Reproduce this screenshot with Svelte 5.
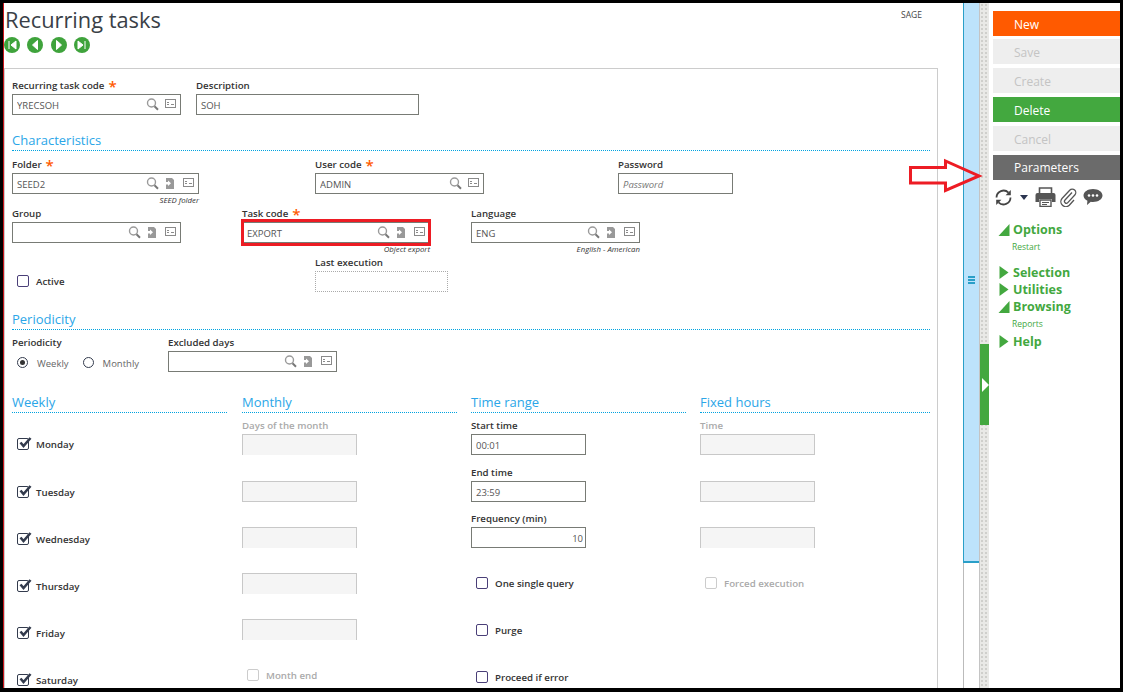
<script>
	const navs = [
		'M5 4v8M12 4 7 8l5 4z',
		'M10.5 3.5 5.5 8l5 4.500z',
		'M5.500 3.500 10.500 8l-5 4.500z',
		'M4 4l5 4-5 4zM11 4v8'
	];
	const days = ['Monday', 'Tuesday', 'Wednesday', 'Thursday', 'Friday', 'Saturday'];
	const monthly = [true, false, true, true, true];
</script>

{#snippet search()}
	<svg class="ico" width="14" height="14" viewBox="0 0 14 14" fill="none">
		<circle cx="6.500" cy="6" r="4" stroke="#9a9a9a" stroke-width="1.400" />
		<path d="M9.500 9.300 13 12.800" stroke="#777" stroke-width="2" />
	</svg>
{/snippet}

{#snippet jump()}
	<svg class="ico" width="14" height="14" viewBox="0 0 14 14">
		<path d="M3 2h6l2 2v9H3z" fill="#999" />
		<path d="M2 6h3V4.500L8 7.200 5 10V8.500H2z" fill="#fff" />
	</svg>
{/snippet}

{#snippet card()}
	<svg class="ico" width="14" height="14" viewBox="0 0 14 14" fill="none">
		<rect x="2.500" y="2.500" width="10" height="8" stroke="#8a8a8a" />
		<path d="M4 5.500h2M4 7.500h2M8 7.500h3" stroke="#8a8a8a" />
	</svg>
{/snippet}

{#snippet lookup(cls, label, value, req, icons, caption)}
	<div class="field {cls}">
		<span class="lbl">{label}{#if req}<b class="req">*</b>{/if}</span>
		<div class="box">
			<input {value} readonly />
			{@render search()}
			{#if icons > 2}{@render jump()}{/if}
			{@render card()}
		</div>
		{#if caption}<span class="caption">{caption}</span>{/if}
	</div>
{/snippet}

{#snippet text(cls, label, value)}
	<div class="field {cls}">
		<span class="lbl">{label}</span>
		<div class="box"><input {value} readonly /></div>
	</div>
{/snippet}

{#snippet off(label, cut)}
	<div class="field w115 off">
		<span class="lbl">{label}</span>
		<div class="box" class:cut></div>
	</div>
{/snippet}

{#snippet check(label, on, dim)}
	<div class="check" class:dim>
		<span class="tick" class:on>
			{#if on}
				<svg width="16" height="14" viewBox="0 0 16 14" fill="none">
					<path d="M3.500 6.500 6.500 10 13.500 2" stroke="#333b4d" stroke-width="2.600" />
				</svg>
			{/if}
		</span>
		{label}
	</div>
{/snippet}

<div class="frame">
	<main>
		<header>
			<div class="top">
				<h1>Recurring tasks</h1>
				<span class="sage">SAGE</span>
			</div>
			<div class="navs">
				{#each navs as d}
					<svg width="16" height="16" viewBox="0 0 16 16">
						<circle cx="8" cy="8" r="8" fill="#3fa33c" />
						<path {d} fill="#fff" stroke="#fff" stroke-width="1" />
					</svg>
				{/each}
			</div>
		</header>

		<form class="card">
			<div class="row-one">
				{@render lookup('w169', 'Recurring task code', 'YRECSOH', true, 2)}
				{@render text('w223', 'Description', 'SOH')}
			</div>

			<h2 class="first">Characteristics</h2>
			<div class="grid-top">
				{@render lookup('w187 c1', 'Folder', 'SEED2', true, 3, 'SEED folder')}
				{@render lookup('w169 c3', 'User code', 'ADMIN', true, 2)}
				<div class="field w115 c5">
					<span class="lbl">Password</span>
					<div class="box"><input class="pass" placeholder="Password" readonly /></div>
				</div>

				{@render lookup('w169 c1', 'Group', '', false, 3)}
				<div class="c2 marked">
					{@render lookup('w188', 'Task code', 'EXPORT', true, 3, 'Object export')}
				</div>
				{@render lookup('w169 c4', 'Language', 'ENG', false, 3, 'English - American')}

				<div class="c1 active">{@render check('Active', false)}</div>
				<div class="field w133 c3 last">
					<span class="lbl">Last execution</span>
					<div class="box"></div>
				</div>
			</div>

			<h2 class="second">Periodicity</h2>
			<div class="period">
				<div class="period-left">
					<span class="lbl">Periodicity</span>
					<div class="radios">
						<span class="radio on"></span><span class="opt">Weekly</span>
						<span class="radio"></span><span class="opt">Monthly</span>
					</div>
				</div>
				{@render lookup('w169', 'Excluded days', '', false, 3)}
			</div>

			<div class="columns">
				<section>
					<h2>Weekly</h2>
					<div class="days">
						{#each days as day}
							{@render check(day, true)}
						{/each}
					</div>
				</section>

				<section>
					<h2>Monthly</h2>
					<div class="stack month">
						{#each monthly as cut, i}
							{@render off(i === 0 ? 'Days of the month' : '', cut)}
						{/each}
						{@render check('Month end', false, true)}
					</div>
				</section>

				<section>
					<h2>Time range</h2>
					<div class="stack times">
						{@render text('w115', 'Start time', '00:01')}
						{@render text('w115', 'End time', '23:59')}
						{@render text('w115 num', 'Frequency (min)', '10')}
						{@render check('One single query', false)}
						{@render check('Purge', false)}
						{@render check('Proceed if error', false)}
					</div>
				</section>

				<section>
					<h2>Fixed hours</h2>
					<div class="stack times">
						{@render off('Time', false)}
						{@render off('', false)}
						{@render off('', true)}
						{@render check('Forced execution', false, true)}
					</div>
				</section>
			</div>
		</form>
	</main>

	<div class="rail">
		<div class="thumb">
			<span class="burger"></span>
		</div>
	</div>

	<div class="gutter">
		<div class="grip"><span></span></div>
	</div>

	<aside>
		<div class="buttons">
			<button class="orange">New</button>
			<button disabled>Save</button>
			<button disabled>Create</button>
			<button class="green">Delete</button>
			<button disabled>Cancel</button>
			<button class="dark">Parameters</button>
		</div>

		<div class="tools">
			<svg class="refresh" width="19" height="19" viewBox="0 0 19 19" fill="none">
				<path d="M2.500 9.500a7 7 0 0 1 12-4.800" stroke="#444" stroke-width="1.800" />
				<path d="M16.500 9.500a7 7 0 0 1-12 4.800" stroke="#444" stroke-width="1.800" />
				<path d="M16.800 2v5.200h-5.200zM2.200 17v-5.200h5.200z" fill="#444" />
			</svg>
			<svg class="caret" width="8" height="5" viewBox="0 0 8 5"><path d="M0 0h8L4 5z" fill="#2b3550" /></svg>
			<svg class="printer" width="21" height="20" viewBox="0 0 21 20">
				<path d="M4.500 1h12v6h-12z" fill="none" stroke="#555" stroke-width="1.600" />
				<path d="M2.500 6h16a2 2 0 0 1 2 2v7h-3.500v-3H4v3H.5V8a2 2 0 0 1 2-2z" fill="#555" />
				<path d="M5 13h11v6.500H5z" fill="#fff" stroke="#555" stroke-width="1.400" />
				<path d="M7 15.500h7M7 17.500h5" stroke="#555" />
			</svg>
			<svg class="clip" width="18" height="20" viewBox="0 0 18 20" fill="none">
				<path d="M13 5.500 6 13a1.900 1.900 0 0 0 2.800 2.600l7-7.600a3.500 3.500 0 0 0-5.100-4.800L3 11.500a5 5 0 0 0 7.300 6.800L15 13" stroke="#555" stroke-width="1.300" />
			</svg>
			<svg class="chat" width="20" height="18" viewBox="0 0 20 18">
				<path d="M10 1c5.300 0 9.500 2.900 9.500 6.500S15.300 14 10 14c-.8 0-1.500-.1-2.200-.2L4 17l.4-4.300C2 11.500.5 9.700.5 7.500.5 3.900 4.700 1 10 1z" fill="#555" />
				<circle cx="6" cy="7.500" r="1.300" fill="#fff" />
				<circle cx="10" cy="7.500" r="1.300" fill="#fff" />
				<circle cx="14" cy="7.500" r="1.300" fill="#fff" />
			</svg>
		</div>

		<nav>
			<div class="item one">
				<svg width="11" height="12" viewBox="0 0 11 12"><path d="M11 0v12H0z" fill="#43a83f" /></svg>
				Options
			</div>
			<div class="sub">Restart</div>
			<div class="item two">
				<svg width="9" height="13" viewBox="0 0 9 13"><path d="M0 0l9 6.500L0 13z" fill="#43a83f" /></svg>
				Selection
			</div>
			<div class="item">
				<svg width="9" height="13" viewBox="0 0 9 13"><path d="M0 0l9 6.500L0 13z" fill="#43a83f" /></svg>
				Utilities
			</div>
			<div class="item">
				<svg width="11" height="12" viewBox="0 0 11 12"><path d="M11 0v12H0z" fill="#43a83f" /></svg>
				Browsing
			</div>
			<div class="sub">Reports</div>
			<div class="item help">
				<svg width="9" height="13" viewBox="0 0 9 13"><path d="M0 0l9 6.500L0 13z" fill="#43a83f" /></svg>
				Help
			</div>
		</nav>
	</aside>

	<svg class="arrow" width="78" height="38" viewBox="0 0 78 38" fill="none">
		<path d="M2.500 10.500H37.500V4L71 19 37.500 33.500V26H2.500z" stroke="#ed1c24" stroke-width="3" />
	</svg>
</div>

<style>
	:global(body) {
		background: #000;
	}
	.frame {
		position: relative;
		box-sizing: border-box;
		width: 1123px;
		height: 692px;
		display: flex;
		overflow: hidden;
		background: #fff;
		border: solid #000;
		border-width: 3px 3px 4px;
		font-family: 'Open Sans', 'Liberation Sans', sans-serif;
		color: #333;
	}
	main {
		box-sizing: border-box;
		width: 960px;
		flex: none;
		border-left: 1px solid #c8151b;
		height: 800px;
	}
	header {
		height: 65px;
	}
	.top {
		display: flex;
		justify-content: space-between;
		height: 34px;
	}
	h1 {
		margin: 2px 0 0 1px;
		font-size: 21.800px;
		line-height: 29px;
		font-weight: 400;
		color: #3a3f47;
	}
	.sage {
		margin: 6px 41px 0 0;
		font-size: 8.500px;
		line-height: 12px;
		color: #444;
	}
	.navs {
		display: flex;
		gap: 7px;
		width: 86px;
		justify-content: space-between;
	}
	.navs svg {
		display: block;
	}
	.card {
		box-sizing: border-box;
		width: 934px;
		border: 1px solid #ccc;
		border-bottom: 0;
		padding: 11px 7px 0;
	}
	h2 {
		margin: 0;
		box-sizing: border-box;
		height: 20px;
		font-size: 13px;
		line-height: 18px;
		font-weight: 400;
		color: #2ba6e8;
		border-bottom: 1px dotted #00a3e0;
	}
	.row-one {
		display: flex;
		gap: 15px;
	}
	h2.first {
		margin-top: 16px;
	}
	h2.second {
		margin-top: 18px;
	}
	.grid-top {
		margin-top: 8px;
		display: grid;
		grid-template-columns: 230px 73px 156px 147px 1fr;
		grid-template-rows: 49px 49px 35px;
	}
	.c1 {
		grid-column: 1;
	}
	.c2 {
		grid-column: 2;
	}
	.c3 {
		grid-column: 3;
	}
	.c4 {
		grid-column: 4;
	}
	.c5 {
		grid-column: 5;
	}
	.field {
		display: flex;
		flex-direction: column;
		justify-self: start;
		align-self: start;
	}
	.w115 {
		width: 115px;
	}
	.w133 {
		width: 133px;
	}
	.w169 {
		width: 169px;
	}
	.w187 {
		width: 187px;
	}
	.w188 {
		width: 188px;
	}
	.w223 {
		width: 223px;
	}
	.lbl {
		display: block;
		height: 14px;
		font-size: 9.700px;
		line-height: 12px;
		font-weight: 600;
		white-space: nowrap;
		color: #333;
	}
	.req {
		margin-left: 4px;
		font-size: 15px;
		line-height: 0;
		vertical-align: -3px;
		font-weight: 600;
		color: #ff5a00;
	}
	.box {
		box-sizing: border-box;
		display: flex;
		align-items: center;
		height: 21px;
		padding-right: 1px;
		border: 1px solid #787b75;
	}
	.box input {
		flex: 1;
		min-width: 0;
		height: 19px;
		padding: 2px 0 0 4px;
		box-sizing: border-box;
		border: 0;
		outline: 0;
		background: none;
		font: 400 9.500px 'Open Sans', 'Liberation Sans', sans-serif;
		color: #555;
	}
	.num input {
		text-align: right;
		padding-right: 1px;
	}
	.box input.pass::placeholder {
		font-style: italic;
		color: #777;
	}
	.ico {
		flex: none;
		margin: -2px 2px 0;
	}
	.caption {
		font-size: 7.800px;
		line-height: 12px;
		font-style: italic;
		text-align: right;
		white-space: nowrap;
		color: #333;
	}
	.marked {
		position: relative;
		align-self: start;
	}
	.marked::after {
		content: '';
		position: absolute;
		left: -1px;
		top: 11px;
		width: 190px;
		height: 27px;
		box-sizing: border-box;
		border: 3px solid #ed1c24;
		pointer-events: none;
	}
	.active {
		padding-top: 17px;
	}
	.last .box {
		border: 1px dotted #aaa;
	}
	.check {
		display: flex;
		align-items: center;
		gap: 7px;
		height: 14px;
		margin-left: 5px;
		font-size: 9.700px;
		font-weight: 600;
		white-space: nowrap;
		color: #333;
	}
	.tick {
		position: relative;
		box-sizing: border-box;
		flex: none;
		width: 12px;
		height: 12px;
		border: 1px solid #4a3f78;
		border-radius: 2px;
	}
	.tick.on {
		border-color: #333b4d;
	}
	.tick svg {
		position: absolute;
		left: -1px;
		top: -3px;
	}
	.dim {
		color: #aaa;
	}
	.dim .tick {
		border-color: #ccc;
	}
	.period {
		display: flex;
		margin-top: 7px;
	}
	.period-left {
		width: 156px;
		flex: none;
	}
	.radios {
		display: flex;
		align-items: flex-start;
		margin: 6px 0 0 5px;
	}
	.radio {
		box-sizing: border-box;
		display: grid;
		place-items: center;
		flex: none;
		width: 11px;
		height: 11px;
		border: 1px solid #333b4d;
		border-radius: 50%;
	}
	.radio.on::after {
		content: '';
		width: 5px;
		height: 5px;
		border-radius: 50%;
		background: #333;
	}
	.opt {
		margin: 0 14px 0 9px;
		font-size: 9.500px;
		line-height: 14px;
		color: #666;
	}
	.columns {
		display: grid;
		grid-template-columns: 230px 229px 229px 230px;
		margin-top: 21px;
	}
	section {
		padding-right: 14px;
	}
	section:first-child {
		padding-right: 15px;
	}
	section:last-child {
		padding-right: 0;
	}
	.days {
		display: grid;
		grid-template-rows: 48px repeat(5, 47px);
		margin-top: 24px;
	}
	.stack {
		display: grid;
		margin-top: 7px;
	}
	.month {
		grid-template-rows: 47px 46px 46px 46px 63px 20px;
	}
	.times {
		grid-template-rows: 47px 46px 63px 47px 47px 20px;
	}
	.off .lbl {
		color: #aaa;
	}
	.off .box {
		border-color: #c8c8c8;
		background: #f5f5f5;
	}
	.off .box.cut {
		border-bottom: 0;
	}
	.rail {
		flex: none;
		width: 16px;
		box-sizing: border-box;
		border-left: 1px solid #bbb;
	}
	.thumb {
		box-sizing: border-box;
		display: flex;
		justify-content: center;
		margin: 0 -1px 0 -1px;
		height: 560px;
		padding-top: 273px;
		background: #bde3fb;
		border: 1px solid #2a9fc8;
		border-width: 0 1px 2px;
	}
	.burger {
		width: 7px;
		height: 2px;
		margin-top: 0;
		background: #2a9fc8;
		box-shadow: 0 3px 0 #2a9fc8, 0 6px 0 #2a9fc8;
	}
	.gutter {
		flex: none;
		width: 10px;
		box-sizing: border-box;
		border-left: 1px solid #c4c4c4;
		background-color: #e9e9e6;
		background-image: radial-gradient(#cfcfcb 1px, transparent 1px);
		background-size: 4px 4px;
	}
	.grip {
		display: flex;
		align-items: center;
		justify-content: flex-end;
		height: 81px;
		margin-top: 341px;
		background: #43a83f;
	}
	.grip span {
		width: 0;
		height: 0;
		border-left: 7px solid #fff;
		border-top: 7px solid transparent;
		border-bottom: 7px solid transparent;
	}
	aside {
		flex: 1;
		min-width: 0;
		padding-top: 8px;
	}
	.buttons {
		display: grid;
		grid-template-rows: 28px repeat(5, 29px);
		margin-left: 4px;
	}
	button {
		height: 25px;
		padding: 2px 0 0 21px;
		border: 0;
		text-align: left;
		font: 400 12px 'Open Sans', 'Liberation Sans', sans-serif;
		color: #fff;
	}
	button:disabled {
		background: #eee;
		color: #c4c4c4;
	}
	.orange {
		background: #ff5a00;
	}
	.green {
		background: #43a83f;
	}
	.dark {
		padding-top: 0;
		background: #6b6b6b;
	}
	.tools {
		display: flex;
		align-items: center;
		height: 22px;
		margin: 2px 0 0 5px;
	}
	.caret {
		margin: 0 7px 0 7px;
	}
	.clip {
		margin: 0 6px 0 3px;
	}
	.item {
		display: flex;
		align-items: center;
		height: 17px;
		margin-left: 6px;
		font-size: 12.500px;
		line-height: 17px;
		font-weight: 700;
		color: #43a83f;
	}
	.item svg {
		width: 18px;
		flex: none;
		overflow: visible;
	}
	.one {
		margin-top: 13px;
	}
	.two {
		margin-top: 9px;
	}
	.help {
		margin-top: 1px;
	}
	.sub {
		height: 17px;
		margin-left: 23px;
		font-size: 8.500px;
		line-height: 17px;
		color: #43a83f;
	}
	.arrow {
		position: absolute;
		left: 905px;
		top: 154px;
		pointer-events: none;
	}
</style>
